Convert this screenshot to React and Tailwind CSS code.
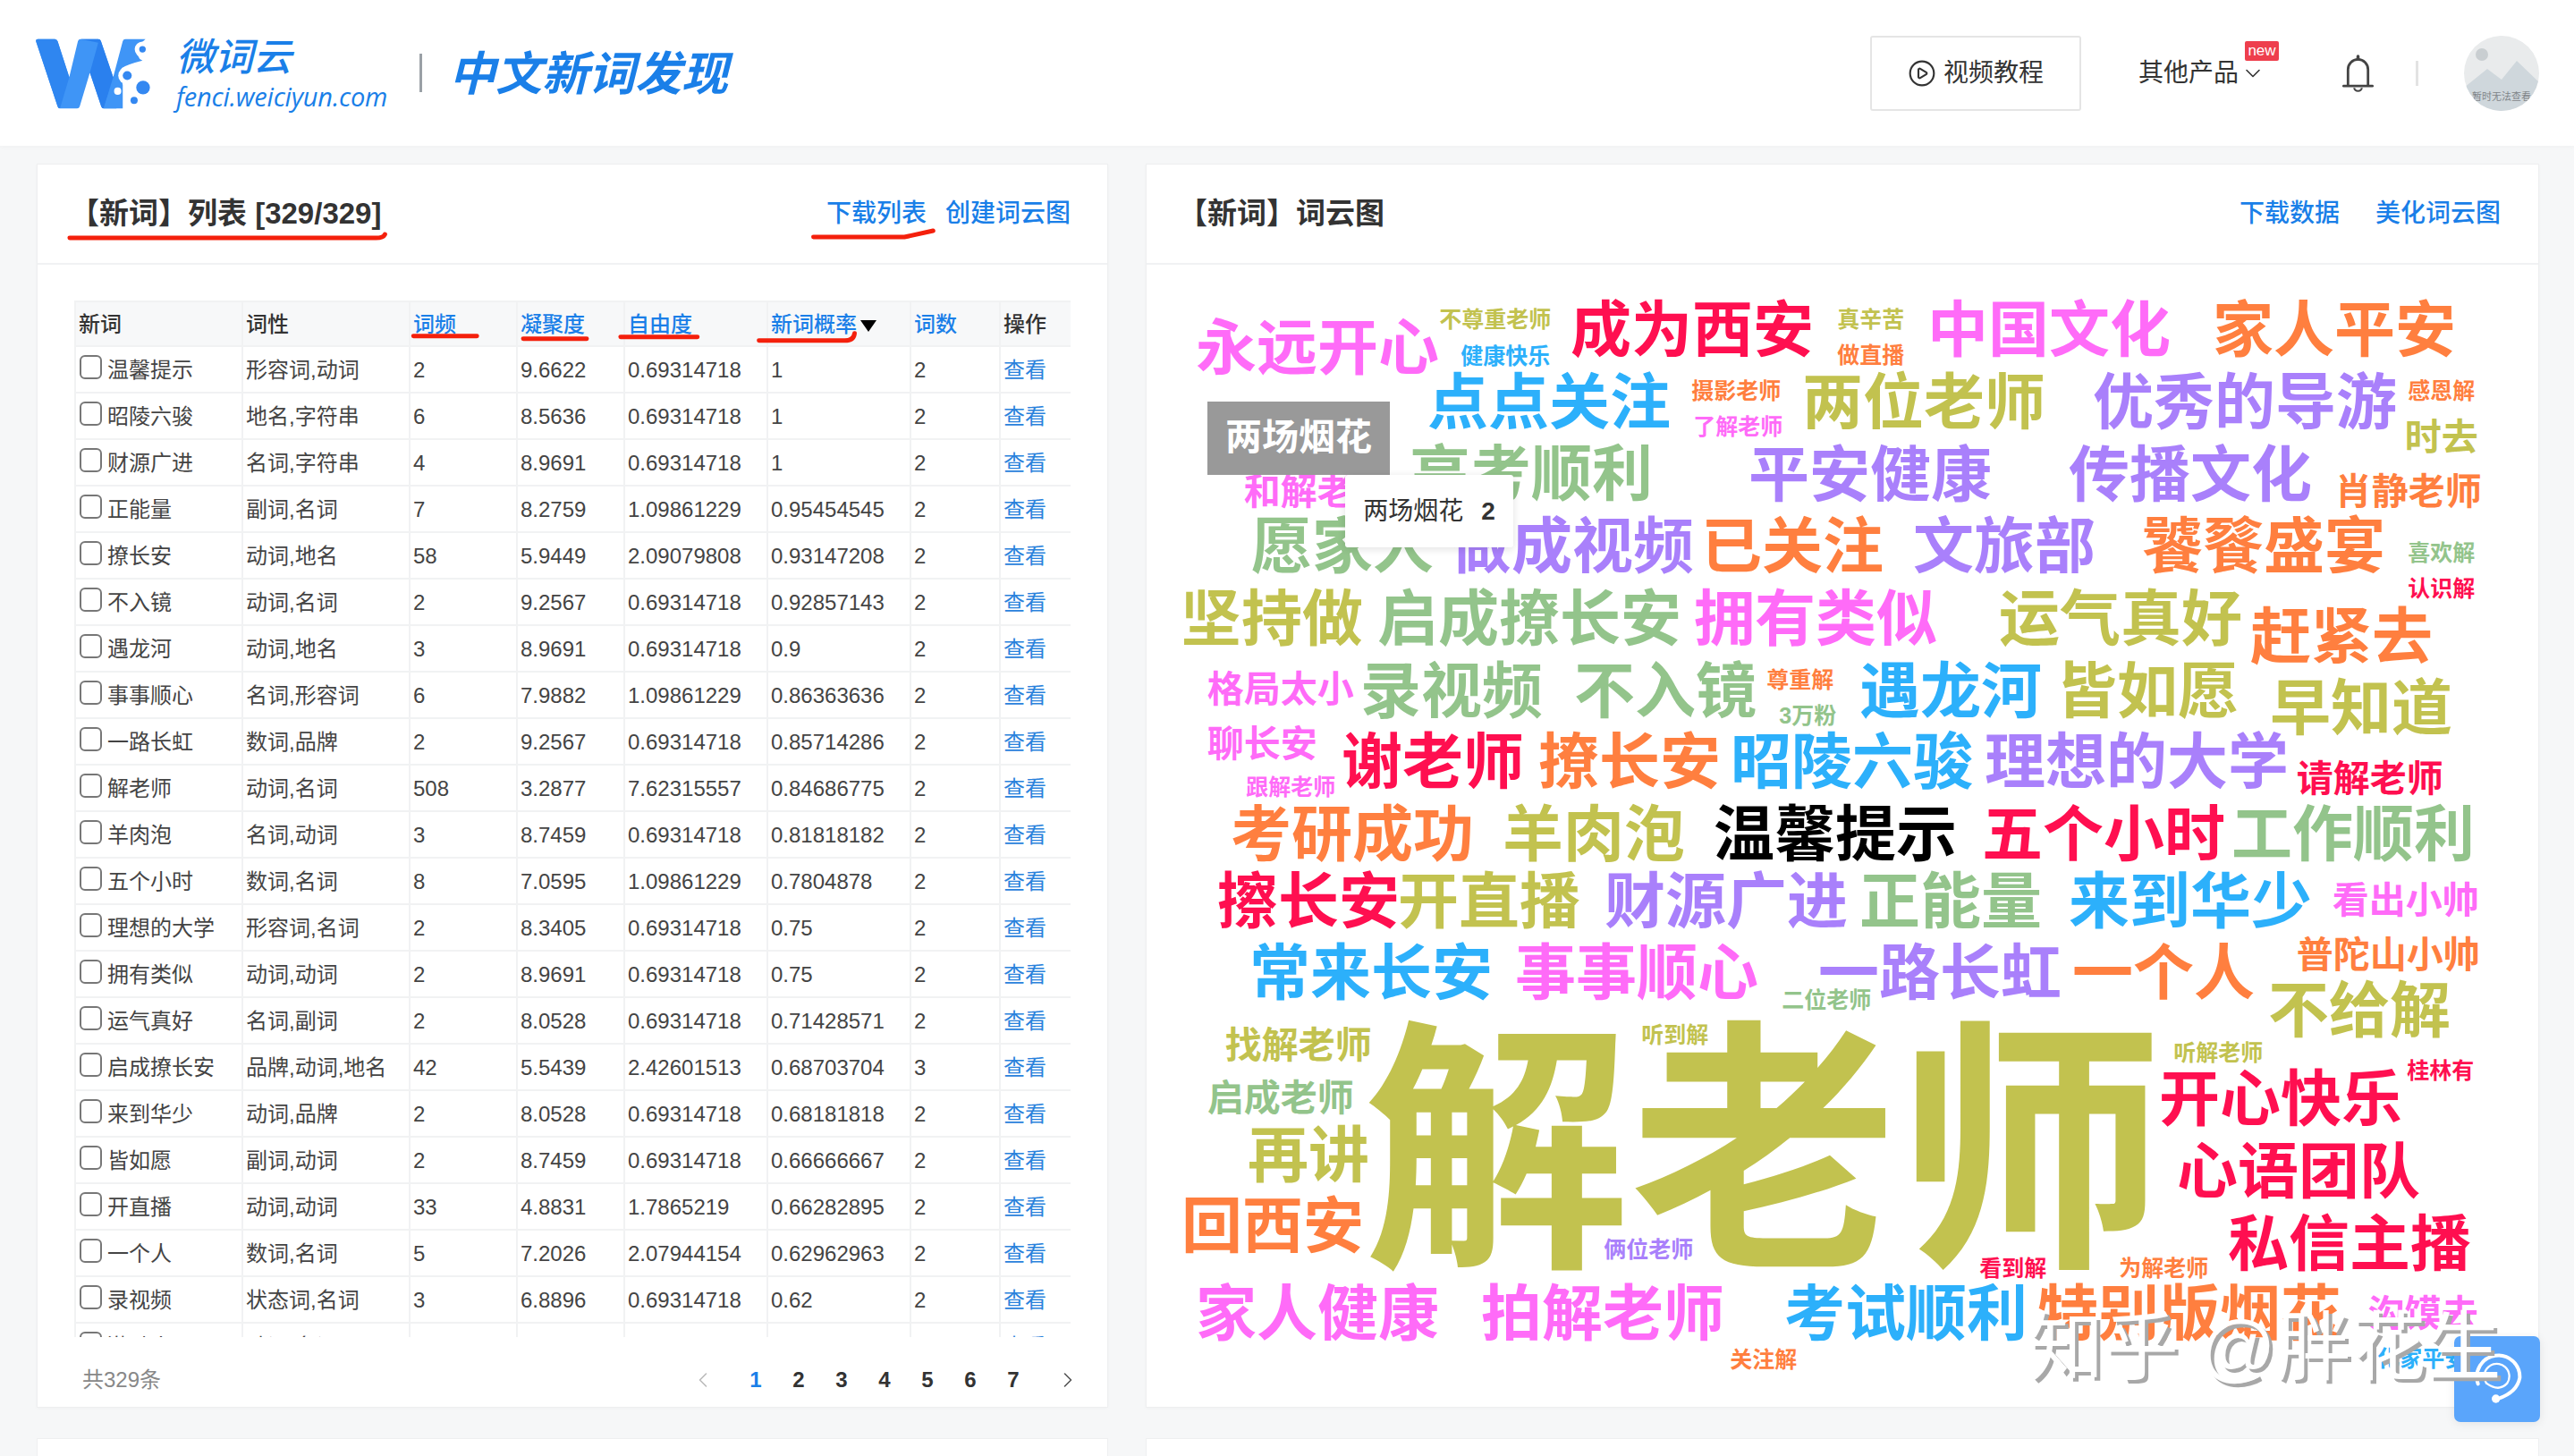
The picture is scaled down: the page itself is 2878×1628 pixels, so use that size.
import React from "react";
import { CirclePlay, ChevronDown, ChevronLeft, ChevronRight } from "lucide-react";

const P = "#ff6bf8", R = "#ff0f50", O = "#ff7f3f", Y = "#c2c24f", G = "#93c48b", B = "#2cb0fb", V = "#a980fb", K = "#000000";

const words = [
  ["解老师", 1533, 1149, 298, Y],
  ["永远开心", 1338, 357, 68, P], ["不尊重老师", 1609, 346, 25, Y], ["健康快乐", 1633, 387, 25, B], ["成为西安", 1757, 337, 68, R],
  ["真辛苦", 2054, 346, 25, Y], ["做直播", 2054, 386, 25, O], ["中国文化", 2156, 337, 68, P], ["家人平安", 2475, 337, 68, O],
  ["点点关注", 1597, 418, 68, B], ["摄影老师", 1891, 426, 25, O], ["了解老师", 1893, 466, 25, P], ["两位老师", 2016, 418, 68, Y],
  ["优秀的导游", 2341, 418, 68, V], ["感恩解", 2692, 426, 25, O], ["时去", 2689, 471, 41, Y], ["高考顺利", 1577, 498, 68, G],
  ["和解老师", 1391, 532, 41, P], ["平安健康", 1956, 499, 68, V], ["传播文化", 2314, 499, 68, V], ["肖静老师", 2611, 532, 41, O],
  ["愿家人", 1400, 579, 68, G], ["做成视频", 1623, 579, 68, V], ["已关注", 1903, 579, 68, O], ["文旅部", 2140, 579, 68, V],
  ["饕餮盛宴", 2396, 579, 68, O], ["喜欢解", 2692, 607, 25, G], ["认识解", 2692, 647, 25, R], ["坚持做", 1321, 660, 68, Y],
  ["启成撩长安", 1541, 660, 68, G], ["拥有类似", 1895, 660, 68, P], ["运气真好", 2236, 660, 68, Y], ["赶紧去", 2517, 680, 68, O],
  ["格局太小", 1350, 753, 41, P], ["录视频", 1522, 741, 68, G], ["不入镜", 1761, 741, 68, G], ["尊重解", 1975, 749, 25, O],
  ["3万粉", 1989, 789, 25, G], ["遇龙河", 2080, 741, 68, B], ["皆如愿", 2300, 741, 68, Y], ["早知道", 2539, 760, 68, Y],
  ["聊长安", 1350, 814, 41, P], ["跟解老师", 1393, 869, 25, P], ["谢老师", 1501, 820, 68, R], ["撩长安", 1721, 820, 68, O],
  ["昭陵六骏", 1936, 820, 68, B], ["理想的大学", 2220, 820, 68, V], ["请解老师", 2568, 853, 41, R], ["考研成功", 1377, 901, 68, O],
  ["羊肉泡", 1681, 901, 68, Y], ["温馨提示", 1917, 901, 68, K], ["五个小时", 2217, 901, 68, R], ["工作顺利", 2496, 901, 68, G],
  ["擦长安", 1362, 976, 68, R], ["开直播", 1564, 976, 68, Y], ["财源广进", 1795, 976, 68, V], ["正能量", 2080, 976, 68, G],
  ["来到华少", 2314, 976, 68, B], ["看出小帅", 2608, 989, 41, P], ["常来长安", 1398, 1056, 68, B], ["事事顺心", 1695, 1056, 68, P],
  ["二位老师", 1992, 1107, 25, G], ["一路长虹", 2034, 1056, 68, V], ["一个人", 2318, 1056, 68, O], ["普陀山小帅", 2568, 1050, 41, O],
  ["不给解", 2537, 1098, 68, Y], ["找解老师", 1370, 1151, 41, Y], ["听到解", 1835, 1146, 25, Y],
  ["听解老师", 2430, 1166, 25, Y], ["桂林有", 2691, 1186, 25, R], ["启成老师", 1350, 1210, 41, G], ["开心快乐", 2415, 1197, 68, R],
  ["再讲", 1396, 1260, 68, Y], ["心语团队", 2435, 1278, 68, R], ["回西安", 1322, 1339, 68, O], ["私信主播", 2492, 1359, 68, R],
  ["俩位老师", 1793, 1386, 25, V], ["看到解", 2213, 1407, 25, R], ["为解老师", 2369, 1407, 25, O], ["家人健康", 1338, 1437, 68, P],
  ["拍解老师", 1657, 1437, 68, P], ["考试顺利", 1996, 1437, 68, B], ["特别版烟花", 2279, 1437, 68, O], ["沟馍去", 2648, 1451, 41, P],
  ["关注解", 1934, 1509, 25, O], ["化家平安", 2658, 1508, 25, B],
];

const rows = [
  ["温馨提示", "形容词,动词", "2", "9.6622", "0.69314718", "1", "2"],
  ["昭陵六骏", "地名,字符串", "6", "8.5636", "0.69314718", "1", "2"],
  ["财源广进", "名词,字符串", "4", "8.9691", "0.69314718", "1", "2"],
  ["正能量", "副词,名词", "7", "8.2759", "1.09861229", "0.95454545", "2"],
  ["撩长安", "动词,地名", "58", "5.9449", "2.09079808", "0.93147208", "2"],
  ["不入镜", "动词,名词", "2", "9.2567", "0.69314718", "0.92857143", "2"],
  ["遇龙河", "动词,地名", "3", "8.9691", "0.69314718", "0.9", "2"],
  ["事事顺心", "名词,形容词", "6", "7.9882", "1.09861229", "0.86363636", "2"],
  ["一路长虹", "数词,品牌", "2", "9.2567", "0.69314718", "0.85714286", "2"],
  ["解老师", "动词,名词", "508", "3.2877", "7.62315557", "0.84686775", "2"],
  ["羊肉泡", "名词,动词", "3", "8.7459", "0.69314718", "0.81818182", "2"],
  ["五个小时", "数词,名词", "8", "7.0595", "1.09861229", "0.7804878", "2"],
  ["理想的大学", "形容词,名词", "2", "8.3405", "0.69314718", "0.75", "2"],
  ["拥有类似", "动词,动词", "2", "8.9691", "0.69314718", "0.75", "2"],
  ["运气真好", "名词,副词", "2", "8.0528", "0.69314718", "0.71428571", "2"],
  ["启成撩长安", "品牌,动词,地名", "42", "5.5439", "2.42601513", "0.68703704", "3"],
  ["来到华少", "动词,品牌", "2", "8.0528", "0.69314718", "0.68181818", "2"],
  ["皆如愿", "副词,动词", "2", "8.7459", "0.69314718", "0.66666667", "2"],
  ["开直播", "动词,动词", "33", "4.8831", "1.7865219", "0.66282895", "2"],
  ["一个人", "数词,名词", "5", "7.2026", "2.07944154", "0.62962963", "2"],
  ["录视频", "状态词,名词", "3", "6.8896", "0.69314718", "0.62", "2"],
  ["激励人", "动词,名词", "2", "8.3405", "0.69314718", "0.6", "2"],
];

const th = "h-[50px] pl-[3px] pt-[2px] font-medium text-left border-2 border-[#f1f2f3] bg-[#f7f8f9] text-[#333]";
const td = "h-[52px] pl-[3px] pt-[2px] text-left border-2 border-[#f1f2f3] text-[#444] align-middle";
const hl = "text-[#1a7fe8]";

function Logo() {
  return (
    <svg viewBox="25 30 395 245" className="w-[132px] h-[82px] shrink-0">
      <path d="M38 38H95Q102 38 104 45L143 165L172 45Q174 38 181 38H240Q247 38 249 45L290 165L322 45Q324 38 331 38H398L372 62Q365 100 388 110Q340 122 318 135L326 270H258Q252 270 250 263L212 150L178 263Q176 270 169 270H112Q106 270 104 263L32 46Q30 38 38 38Z" fill="#3f95f6" />
      <path d="M104 45L143 165L112 270Q106 270 104 263L32 46Q30 38 38 38H95Z" fill="#2f86f0" />
      <path d="M181 38H240Q247 38 249 45L290 165L258 270Q252 270 250 263L212 150L240 50Z" fill="#2a80ee" />
      <circle cx="388" cy="72" r="26" fill="#fff" />
      <circle cx="388" cy="72" r="11" fill="#3488f1" />
      <circle cx="337" cy="160" r="30" fill="#fff" />
      <circle cx="337" cy="160" r="15" fill="#3488f1" />
      <path d="M318 190L372 190L345 275H300Z" fill="#fff" />
      <path d="M292 170L322 190L322 270H258Z" fill="#3f95f6" />
      <circle cx="305" cy="212" r="12" fill="#fff" />
      <circle cx="390" cy="200" r="23" fill="#3488f1" />
      <circle cx="360" cy="243" r="12" fill="#3488f1" />
    </svg>
  );
}

function Bell() {
  return (
    <svg viewBox="60 85 100 125" className="w-[35px] h-[44px]" fill="none" stroke="#444" strokeWidth="8">
      <path d="M78 187V135a32 32 0 0 1 64 0V187" />
      <path d="M64 188H156" strokeLinecap="round" />
      <path d="M110 93V102" strokeLinecap="round" strokeWidth="10" />
      <path d="M98 194a12 10 0 0 0 24 0" strokeWidth="6" />
    </svg>
  );
}

function Avatar() {
  return (
    <div className="relative w-[84px] h-[84px] rounded-full overflow-hidden bg-[#e9ebec] shrink-0">
      <svg viewBox="0 0 84 84" className="w-full h-full">
        <circle cx="20" cy="21" r="7" fill="#c9ced1" />
        <path d="M0 58L26 37L42 49L59 28L84 52V84H0Z" fill="#cfd7dc" />
      </svg>
      <span className="absolute left-0 right-0 bottom-[10px] text-center text-[11px] leading-none text-[#7f8589]">暂时无法查看</span>
    </div>
  );
}

function Headset() {
  return (
    <svg viewBox="312 162 288 288" className="w-full h-full" fill="none" stroke="#fff" strokeLinecap="round">
      <path d="M392 322A72 72 0 1 1 532 302Q522 352 458 372" strokeWidth="12" />
      <path d="M420 320A42 42 0 1 1 490 320Q462 350 420 320" strokeWidth="7" />
      <circle cx="452" cy="372" r="14" fill="#fff" stroke="none" />
    </svg>
  );
}

export default function App() {
  return (
    <div className="relative h-[1628px] overflow-hidden bg-[#f6f7f8] [font-family:'Liberation_Sans','Noto_Sans_CJK_SC',sans-serif]">
      <header className="h-[163px] bg-white flex items-center pl-[38px] pr-[39px] shadow-[0_1px_6px_rgba(0,0,0,0.03)]">
        <Logo />
        <div className="ml-[27px] flex flex-col text-[#1a7fe8] w-[241px]">
          <span className="text-[43px] leading-[46px] font-medium italic">微词云</span>
          <span className="text-[29px] leading-[30px] italic mt-[6px] [font-family:'Open_Sans',sans-serif] tracking-[-0.2px]">fenci.weiciyun.com</span>
        </div>
        <div className="ml-[31px] w-[3px] h-[43px] bg-[#9aa0a6]" />
        <h1 className="ml-[30px] mt-[2px] text-[52px] leading-none font-bold italic text-[#1a7fe8]">中文新词发现</h1>
        <div className="ml-auto flex items-center">
          <button className="w-[236px] h-[84px] border-2 border-[#e5e5e5] rounded-[3px] flex items-center justify-center gap-[8px] text-[28px] text-[#333]">
            <CirclePlay size={32} strokeWidth={1.6} className="text-[#333]" />
            <span>视频教程</span>
          </button>
          <div className="relative ml-[64px] flex items-center text-[28px] text-[#333]">
            <span>其他产品</span>
            <ChevronDown size={28} strokeWidth={1.4} className="ml-[2px]" />
            <span className="absolute left-[119px] top-[-15px] w-[38px] h-[22px] rounded-[2px] bg-[#ee3f4d] text-white text-[17px] leading-[22px] text-center">new</span>
          </div>
          <div className="ml-[86px]"><Bell /></div>
          <div className="ml-[47px] w-[3px] h-[28px] bg-[#e3e3e3]" />
          <div className="ml-[51px]"><Avatar /></div>
        </div>
      </header>

      <main className="flex gap-[42px] pl-[41px] pt-[20px]">
        <section className="relative w-[1198px] h-[1391px] bg-white border border-[#eeeff0] shadow-[0_1px_4px_rgba(0,0,0,0.03)] flex flex-col">
          <div className="h-[112px] flex items-center pl-[36px] pr-[41px] border-b-2 border-[#f1f2f3] shrink-0">
            <h2 className="text-[33px] font-bold text-[#333]">【新词】列表 [329/329]</h2>
            <a className="ml-auto text-[28px] font-medium text-[#1a7fe8]">下载列表</a>
            <a className="ml-[21px] text-[28px] font-medium text-[#1a7fe8]">创建词云图</a>
          </div>
          <div className="mt-[40px] ml-[41px] w-[1114px] h-[1159px] overflow-hidden shrink-0">
            <table className="w-[1114px] table-fixed border-collapse text-[24px] leading-none">
              <colgroup>
                <col className="w-[187px]" /><col className="w-[187px]" /><col className="w-[120px]" /><col className="w-[120px]" />
                <col className="w-[160px]" /><col className="w-[160px]" /><col className="w-[100px]" /><col className="w-[80px]" />
              </colgroup>
              <thead>
                <tr>
                  <th className={th}>新词</th>
                  <th className={th}>词性</th>
                  <th className={th}><a className={hl}>词频</a></th>
                  <th className={th}><a className={hl}>凝聚度</a></th>
                  <th className={th}><a className={hl}>自由度</a></th>
                  <th className={th}><a className={hl}>新词概率</a><span className="ml-[4px] inline-block w-0 h-0 border-x-[9px] border-x-transparent border-t-[13px] border-t-black align-middle" /></th>
                  <th className={th}><a className={hl}>词数</a></th>
                  <th className={th}>操作</th>
                </tr>
              </thead>
              <tbody>
                {rows.map((r) => (
                  <tr key={r[0]}>
                    <td className={td}>
                      <span className="flex items-center">
                        <span className="ml-[1px] w-[25px] h-[27px] border-2 border-[#777] rounded-[6px] mr-[6px] -mt-[8px] shrink-0" />
                        {r[0]}
                      </span>
                    </td>
                    {r.slice(1).map((c, i) => (
                      <td key={i} className={td}>{c}</td>
                    ))}
                    <td className={td}><a className="text-[#2a82dc]">查看</a></td>
                  </tr>
                ))}
              </tbody>
            </table>
          </div>
          <div className="flex-1 flex items-center pl-[50px] text-[24px] pt-[18px]">
            <span className="text-[#888]">共329条</span>
            <nav className="ml-auto flex items-center font-bold text-[#333]">
              <ChevronLeft size={28} strokeWidth={1.4} className="text-[#bbb] mr-[21px]" />
              <span className="w-[48px] text-center text-[#1a7fe8]">1</span>
              <span className="w-[48px] text-center">2</span>
              <span className="w-[48px] text-center">3</span>
              <span className="w-[48px] text-center">4</span>
              <span className="w-[48px] text-center">5</span>
              <span className="w-[48px] text-center">6</span>
              <span className="w-[48px] text-center">7</span>
              <ChevronRight size={28} strokeWidth={1.4} className="text-[#555] ml-[23px] mr-[30px]" />
            </nav>
          </div>
          <svg viewBox="41 183 1198 1391" className="absolute inset-0 w-full h-full pointer-events-none" fill="none" stroke="#f4200c" strokeWidth="5" strokeLinecap="round">
            <path d="M77 265H420Q428 265 430 261" />
            <path d="M910 264H1012L1044 257" />
            <path d="M462 375H533" />
            <path d="M585 378H656" />
            <path d="M694 376H780" />
            <path d="M849 380H945Q955 380 956 372" />
          </svg>
        </section>

        <section className="w-[1558px] h-[1391px] bg-white border border-[#eeeff0] shadow-[0_1px_4px_rgba(0,0,0,0.03)] flex flex-col">
          <div className="h-[112px] flex items-center pl-[35px] pr-[42px] border-b-2 border-[#f1f2f3] shrink-0">
            <h2 className="text-[33px] font-bold text-[#333]">【新词】词云图</h2>
            <a className="ml-auto text-[28px] font-medium text-[#1a7fe8]">下载数据</a>
            <a className="ml-[40px] text-[28px] font-medium text-[#1a7fe8]">美化词云图</a>
          </div>
          <div className="relative flex-1 overflow-hidden">
            {words.map(([t, x, y, s, c]) => (
              <span
                key={t + x}
                className="absolute whitespace-nowrap font-bold leading-none"
                style={{ left: x - 1281 - 0.03 * s, top: y - 297 - 0.02 * s, fontSize: s, color: c }}
              >
                {t}
              </span>
            ))}
            <div className="absolute left-[68px] top-[153px] w-[204px] h-[82px] bg-[#999] text-white text-[41px] font-bold flex items-center justify-center">两场烟花</div>
            <div className="absolute left-[222px] top-[235px] w-[188px] h-[81px] bg-white rounded-[3px] shadow-[0_2px_10px_rgba(0,0,0,0.12)] flex items-center justify-center text-[28px] text-[#333]">
              <span>两场烟花</span>
              <span className="ml-[20px] font-bold">2</span>
            </div>
          </div>
        </section>
      </main>

      <div className="flex gap-[42px] pl-[41px] pt-[34px]">
        <div className="w-[1198px] h-[60px] bg-white border border-[#eeeff0]" />
        <div className="w-[1558px] h-[60px] bg-white border border-[#eeeff0]" />
      </div>

      <div className="absolute left-[2744px] top-[1494px] w-[96px] h-[96px] rounded-[7px] bg-[#5aa5fb] shadow-[0_2px_12px_rgba(0,0,0,0.08)]">
        <Headset />
      </div>
      <div className="absolute left-[2268px] top-[1465px] text-[84px] leading-none whitespace-nowrap text-white [text-shadow:4px_4px_0_#a8a8a8]">知乎 @胖花生</div>
    </div>
  );
}
